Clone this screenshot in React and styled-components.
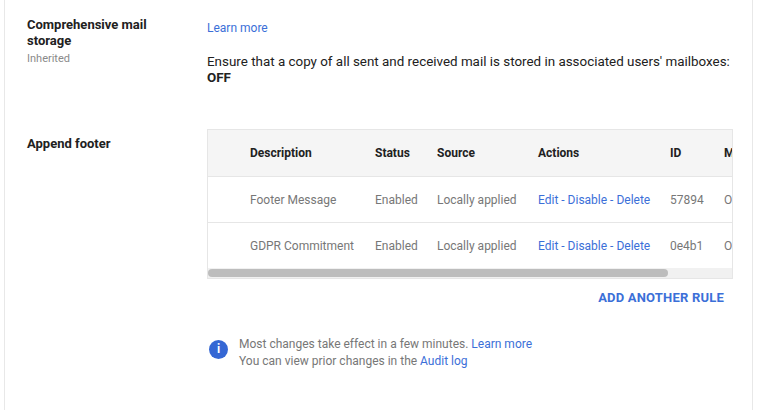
import React from 'react';
import styled, { createGlobalStyle } from 'styled-components';

const Global = createGlobalStyle`
  body { margin: 0; background: #fff; font-family: Roboto, "Liberation Sans", sans-serif; }
`;

const Card = styled.div`
  margin-left: 4px;
  width: 749px;
  height: 410px;
  box-sizing: border-box;
  border-left: 1px solid #e8e8e8;
  border-right: 1px solid #e8e8e8;
  padding: 17px 0 0 22px;
  overflow: hidden;
`;

const Row = styled.div`
  display: grid;
  grid-template-columns: 180px 1fr;
  margin-bottom: ${p => p.$gap || 0}px;
`;

const Label = styled.div`
  font-size: 13px;
  font-weight: 700;
  color: #212121;
  line-height: 16px;
  padding-top: ${p => p.$pt || 0}px;
`;

const Sub = styled.div`
  font-size: 11px;
  color: #8a8a8a;
  margin-top: 3px;
`;

const Link = styled.a`
  color: #3b6fd8;
  text-decoration: none;
  font-size: ${p => p.$size || 12}px;
`;

const Body = styled.div`
  font-size: 13.4px;
  color: #212121;
  line-height: 16px;
  margin-top: 18px;
  width: 540px;
`;

const TableWrap = styled.div`
  width: 524px;
  border: 1px solid #e6e6e6;
  overflow: hidden;
  margin-top: -7px;
`;

const Grid = styled.div`
  display: grid;
  grid-template-columns: 42px 125px 62px 101px 132px 54px 40px;
  white-space: nowrap;
  font-size: 12px;
`;

const Head = styled.div`
  background: #f5f5f5;
  font-weight: 700;
  color: #212121;
  height: 46px;
  display: flex;
  align-items: center;
  border-bottom: 1px solid #e6e6e6;
`;

const Cell = styled.div`
  height: 45px;
  display: flex;
  align-items: center;
  color: ${p => (p.$link ? '#3b6fd8' : '#777')};
  border-bottom: ${p => (p.$last ? 'none' : '1px solid #e6e6e6')};
  overflow: hidden;
`;

const Scroll = styled.div`
  height: 10px;
  background: #f1f1f1;
  padding: 1px 0;
  box-sizing: border-box;
`;

const Thumb = styled.div`
  width: 460px;
  height: 8px;
  background: #bdbdbd;
  border-radius: 4px;
`;

const AddRule = styled.div`
  width: 517px;
  text-align: right;
  margin-top: 11px;
  color: #3b6fd8;
  font-size: 13px;
  font-weight: 700;
  letter-spacing: 0.2px;
`;

const Info = styled.div`
  display: flex;
  gap: 11px;
  margin: 31px 0 0 2px;
  font-size: 12px;
  color: #777;
  line-height: 17px;
`;

const Dot = styled.div`
  width: 19px;
  height: 19px;
  border-radius: 50%;
  background: #3567d4;
  color: #fff;
  font-size: 12px;
  font-weight: 700;
  display: flex;
  align-items: center;
  justify-content: center;
  margin-top: 4px;
  flex-shrink: 0;
`;

const heads = ['', 'Description', 'Status', 'Source', 'Actions', 'ID', 'M'];
const rows = [
  ['Footer Message', 'Enabled', 'Locally applied', '57894', 'O'],
  ['GDPR Commitment', 'Enabled', 'Locally applied', '0e4b1', 'O'],
];

export default function App() {
  return (
    <>
      <Global />
      <Card>
        <Row $gap={50}>
          <div>
            <Label>Comprehensive mail<br />storage</Label>
            <Sub>Inherited</Sub>
          </div>
          <div>
            <Link>Learn more</Link>
            <Body>
              Ensure that a copy of all sent and received mail is stored in associated users' mailboxes:<br />
              <b>OFF</b>
            </Body>
          </div>
        </Row>
        <Row>
          <Label>Append footer</Label>
          <div>
            <TableWrap>
              <Grid>
                {heads.map((h, i) => <Head key={i}>{h}</Head>)}
                {rows.map((r, ri) => {
                  const last = ri === rows.length - 1;
                  return (
                    <React.Fragment key={ri}>
                      <Cell $last={last} />
                      <Cell $last={last}>{r[0]}</Cell>
                      <Cell $last={last}>{r[1]}</Cell>
                      <Cell $last={last}>{r[2]}</Cell>
                      <Cell $last={last} $link>Edit - Disable - Delete</Cell>
                      <Cell $last={last}>{r[3]}</Cell>
                      <Cell $last={last}>{r[4]}</Cell>
                    </React.Fragment>
                  );
                })}
              </Grid>
              <Scroll><Thumb /></Scroll>
            </TableWrap>
            <AddRule>ADD ANOTHER RULE</AddRule>
            <Info>
              <Dot>i</Dot>
              <div>
                Most changes take effect in a few minutes. <Link>Learn more</Link><br />
                You can view prior changes in the <Link>Audit log</Link>
              </div>
            </Info>
          </div>
        </Row>
      </Card>
    </>
  );
}
